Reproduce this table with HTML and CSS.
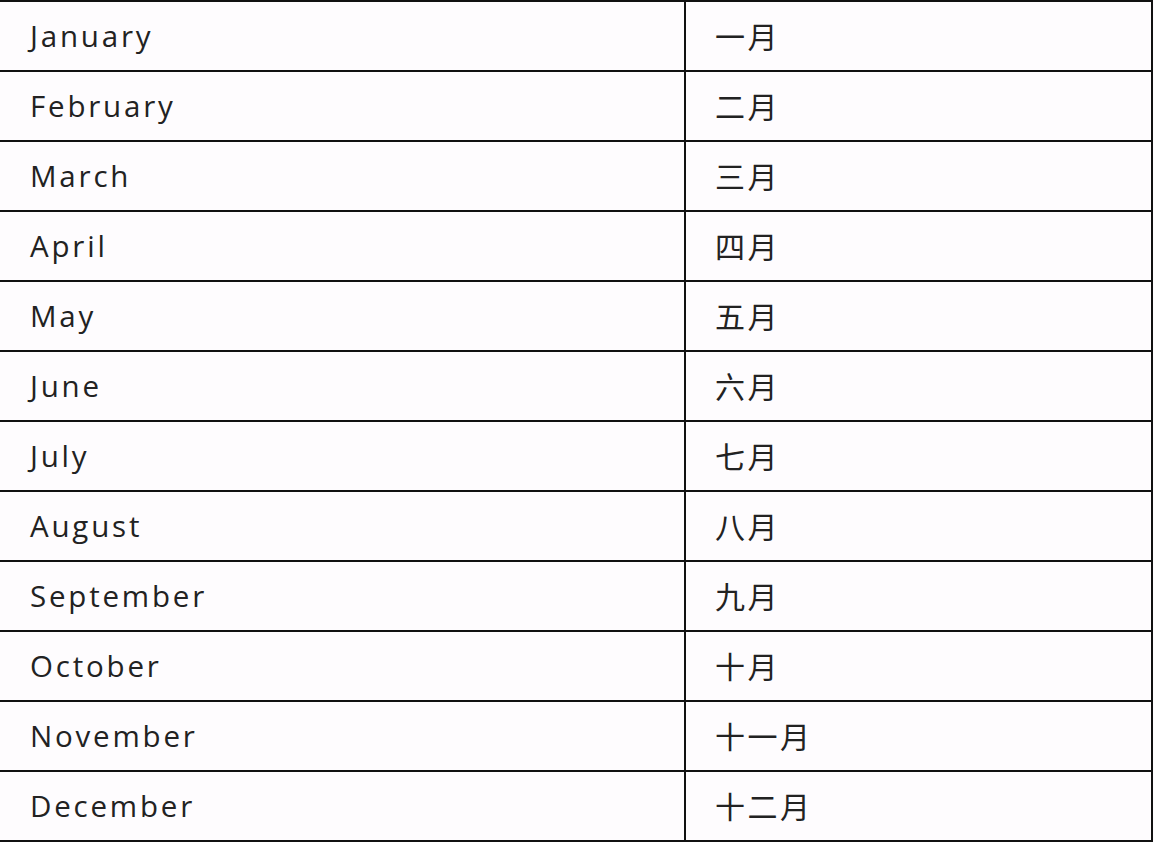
FILE: index.html
```html
<!DOCTYPE html>
<html lang="zh">
<head>
<meta charset="utf-8">
<title>Months</title>
<link rel="stylesheet" href="styles.css">
</head>
<body>
<div class="table">
  <div class="row"><div class="cell en">January</div><div class="cell zh">一月</div></div>
  <div class="row"><div class="cell en">February</div><div class="cell zh">二月</div></div>
  <div class="row"><div class="cell en">March</div><div class="cell zh">三月</div></div>
  <div class="row"><div class="cell en">April</div><div class="cell zh">四月</div></div>
  <div class="row"><div class="cell en">May</div><div class="cell zh">五月</div></div>
  <div class="row"><div class="cell en">June</div><div class="cell zh">六月</div></div>
  <div class="row"><div class="cell en">July</div><div class="cell zh">七月</div></div>
  <div class="row"><div class="cell en">August</div><div class="cell zh">八月</div></div>
  <div class="row"><div class="cell en">September</div><div class="cell zh">九月</div></div>
  <div class="row"><div class="cell en">October</div><div class="cell zh">十月</div></div>
  <div class="row"><div class="cell en">November</div><div class="cell zh">十一月</div></div>
  <div class="row"><div class="cell en">December</div><div class="cell zh">十二月</div></div>
</div>
</body>
</html>
```
FILE: styles.css
```css
html, body {
  margin: 0;
  padding: 0;
  background: #fefcfe;
}
body {
  width: 1154px;
  height: 842px;
  overflow: hidden;
}
.table {
  width: 1153px;
  display: flex;
  flex-direction: column;
  border-bottom: 2px solid #111;
  box-sizing: border-box;
}
.row {
  display: grid;
  grid-template-columns: 684px 1fr;
  height: 70px;
  border-top: 2px solid #111;
  box-sizing: border-box;
}
.cell {
  display: flex;
  align-items: center;
  padding-left: 30px;
  padding-bottom: 2px;
  color: #222;
}
.en {
  font-family: "Open Sans", "Noto Sans", sans-serif;
  font-size: 29.5px;
  letter-spacing: 2.8px;
  padding-left: 30px;
}
.zh {
  font-family: "Noto Sans CJK SC", sans-serif;
  border-left: 2px solid #111;
  border-right: 2px solid #111;
  letter-spacing: 2.5px;
  font-size: 30px;
  padding-left: 29px;
}
```
